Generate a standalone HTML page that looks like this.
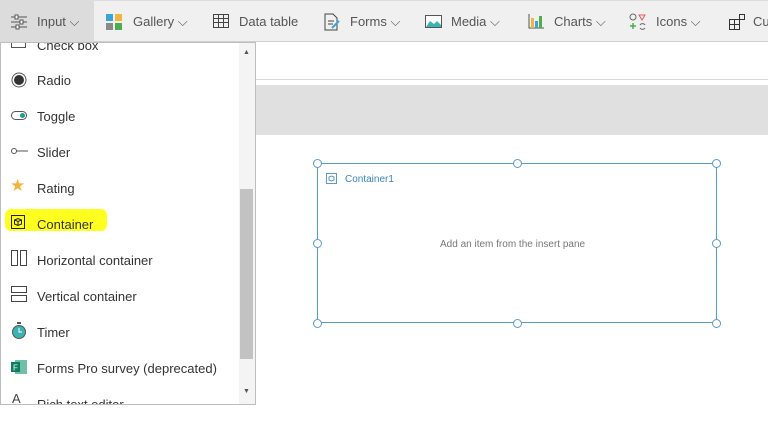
<!DOCTYPE html>
<html><head><style>
*{margin:0;padding:0;box-sizing:border-box}
body{width:768px;height:428px;background:#fff;position:relative;overflow:hidden;font-family:"Liberation Sans",sans-serif;color:#333}
.tb{position:absolute;left:0;top:0;width:768px;height:42px;background:#f0f0f0;border-top:1px solid #ddd;border-bottom:1px solid #d0d0d0}
.ti{position:absolute;top:13px;font-size:13px;color:#555;white-space:nowrap}
.strip{position:absolute;left:0;top:48px;width:768px;height:32px;background:#fff;border-bottom:1px solid #d8d8d8}
.gray{position:absolute;left:0;top:85px;width:768px;height:50px;background:#e0e0e0}
.dd{position:absolute;left:0;top:42px;width:256px;height:363px;background:#fff;border:1px solid #bdbdbd;overflow:hidden}
.it{position:absolute;left:36px;font-size:13px;color:#333;white-space:nowrap}
.ic{position:absolute;left:10px}
.sb{position:absolute;left:238px;top:0;width:16px;height:361px;background:#f4f4f4}
.th{position:absolute;left:239px;top:146px;width:13px;height:170px;background:#c2c2c2}
.box{position:absolute;left:317px;top:163px;width:400px;height:160px;border:1.5px solid #5a9bc8}
.h{position:absolute;width:9px;height:9px;border:1.3px solid #5a9bc8;border-radius:50%;background:#fff}
</style></head><body>
<div class="tb">
 <div style="position:absolute;left:0;top:0;width:94px;height:41px;background:#dcdcdc"></div>
 <svg style="position:absolute;left:10px;top:13px" width="18" height="16"><g stroke="#555" fill="none"><line x1="1" y1="3" x2="17" y2="3"/><line x1="1" y1="8" x2="17" y2="8"/><line x1="1" y1="13" x2="17" y2="13"/><rect x="5" y="1" width="3" height="4" fill="#fff"/><rect x="10" y="6" width="3" height="4" fill="#fff"/><rect x="6" y="11" width="3" height="4" fill="#fff"/></g></svg>
 <div class="ti" style="left:37px">Input ⌵</div>
 <svg style="position:absolute;left:106px;top:13px" width="16" height="16"><rect x="0" y="0" width="7" height="7" fill="#3aa6d8"/><rect x="9" y="0" width="7" height="7" fill="#f2b53c"/><rect x="0" y="9" width="7" height="7" fill="#8a8a8a"/><rect x="9" y="9" width="7" height="7" fill="#4cae4c"/></svg>
 <div class="ti" style="left:133px">Gallery ⌵</div>
 <svg style="position:absolute;left:213px;top:13px" width="16" height="14"><rect x="0.5" y="0.5" width="15" height="13" fill="none" stroke="#444"/><path d="M0 4.5H16M0 8.5H16M5.5 0V14M10.5 0V14" stroke="#444"/></svg>
 <div class="ti" style="left:239px">Data table</div>
 <svg style="position:absolute;left:324px;top:12px" width="16" height="18"><path d="M1 1H9L13 5V17H1Z" fill="none" stroke="#444"/><path d="M4 8H10M4 11H9" stroke="#444"/><path d="M8 15L15 8" stroke="#3aa6d8" stroke-width="2"/></svg>
 <div class="ti" style="left:350px">Forms ⌵</div>
 <svg style="position:absolute;left:425px;top:14px" width="17" height="13"><rect x="0.5" y="0.5" width="16" height="12" fill="#fff" stroke="#555"/><path d="M1 12L5 6L9 9L12 6L16 10V12Z" fill="#3bb3b3"/></svg>
 <div class="ti" style="left:451px">Media ⌵</div>
 <svg style="position:absolute;left:528px;top:13px" width="16" height="15"><path d="M1 0V14H16" stroke="#555" fill="none"/><rect x="3" y="4" width="3" height="10" fill="#f2b53c"/><rect x="7" y="7" width="3" height="7" fill="#3aa6d8"/><rect x="11" y="2" width="3" height="12" fill="#4cae4c"/></svg>
 <div class="ti" style="left:554px">Charts ⌵</div>
 <svg style="position:absolute;left:629px;top:12px" width="18" height="18"><circle cx="4" cy="4" r="3" fill="none" stroke="#666"/><path d="M10 2h6l-3 5z" fill="none" stroke="#e55"/><path d="M4 10v6M1 13h6" stroke="#4cae4c" stroke-width="1.5"/><path d="M11 12a3 3 0 0 1 5 0M16 15a3 3 0 0 1-5 0" stroke="#666" fill="none"/></svg>
 <div class="ti" style="left:656px">Icons ⌵</div>
 <svg style="position:absolute;left:729px;top:13px" width="16" height="16"><path d="M0.5 5.5H10.5V15.5H0.5ZM5.5 5.5V15.5M0.5 10.5H10.5" fill="none" stroke="#333"/><rect x="10.5" y="0.5" width="5" height="5" fill="none" stroke="#333"/></svg>
 <div class="ti" style="left:753px">Cu</div>
</div>
<div class="strip"></div>
<div class="gray"></div>
<div class="box"></div>
<div class="h" style="left:313px;top:159px"></div><div class="h" style="left:513px;top:159px"></div><div class="h" style="left:712px;top:159px"></div>
<div class="h" style="left:313px;top:239px"></div><div class="h" style="left:712px;top:239px"></div>
<div class="h" style="left:313px;top:319px"></div><div class="h" style="left:513px;top:319px"></div><div class="h" style="left:712px;top:319px"></div>
<svg style="position:absolute;left:326px;top:173px" width="11" height="11"><rect x="0.5" y="0.5" width="10" height="10" fill="none" stroke="#5a9bc8"/><path d="M3 4L5.5 3L8 4V7L5.5 8L3 7Z" fill="none" stroke="#5a9bc8"/></svg>
<div style="position:absolute;left:345px;top:174px;font-size:10px;color:#3a85b8">Container1</div>
<div style="position:absolute;left:440px;top:239px;font-size:10px;color:#777">Add an item from the insert pane</div>
<div class="dd">
 <div class="sb"></div><div class="th"></div>
 <div style="position:absolute;left:242px;top:6px;font-size:7px;color:#555">▲</div>
 <div style="position:absolute;left:242px;top:345px;font-size:7px;color:#555">▼</div>
 <svg class="ic" style="top:-6px" width="16" height="12"><rect x="0.5" y="0.5" width="14" height="10" fill="none" stroke="#555"/></svg>
 <div class="it" style="top:-5px">Check box</div>
 <svg class="ic" style="top:29px" width="16" height="16"><circle cx="8" cy="8" r="7" fill="none" stroke="#555"/><circle cx="8" cy="8" r="5" fill="#333"/></svg>
 <div class="it" style="top:30px">Radio</div>
 <svg class="ic" style="top:68px" width="18" height="10"><rect x="0.5" y="0.5" width="15" height="8" rx="4" fill="none" stroke="#555"/><circle cx="11.5" cy="4.5" r="2.5" fill="#16a08d"/></svg>
 <div class="it" style="top:66px">Toggle</div>
 <svg class="ic" style="top:104px" width="18" height="8"><circle cx="3" cy="4" r="2.5" fill="none" stroke="#555"/><path d="M5.5 4H17" stroke="#555"/></svg>
 <div class="it" style="top:102px">Slider</div>
 <div style="position:absolute;left:9px;top:133px;font-size:17px;color:#f2b53c">★</div>
 <div class="it" style="top:138px">Rating</div>
 <div style="position:absolute;left:4px;top:166px;width:102px;height:22px;background:#ffff1f;border-radius:6px"></div>
 <svg class="ic" style="top:172px" width="14" height="14"><rect x="0.5" y="0.5" width="13" height="13" fill="none" stroke="#222"/><path d="M3.5 5L7 3.5L10.5 5V9L7 10.5L3.5 9ZM3.5 5L7 6.5L10.5 5M7 6.5V10.5" fill="none" stroke="#222"/></svg>
 <div class="it" style="top:174px">Container</div>
 <svg class="ic" style="top:207px" width="16" height="16"><rect x="0.5" y="0.5" width="6" height="15" fill="none" stroke="#444"/><rect x="9.5" y="0.5" width="6" height="15" fill="none" stroke="#444"/></svg>
 <div class="it" style="top:210px">Horizontal container</div>
 <svg class="ic" style="top:243px" width="16" height="17"><rect x="0.5" y="0.5" width="15" height="6" fill="none" stroke="#444"/><rect x="0.5" y="9.5" width="15" height="6" fill="none" stroke="#444"/></svg>
 <div class="it" style="top:246px">Vertical container</div>
 <svg class="ic" style="top:279px" width="16" height="17"><rect x="6" y="0" width="4" height="2" fill="#555"/><circle cx="8" cy="10" r="6.5" fill="#3bb3b3" stroke="#555"/><path d="M8 6V10H11" stroke="#fff" fill="none"/></svg>
 <div class="it" style="top:282px">Timer</div>
 <svg class="ic" style="top:316px" width="16" height="16"><rect x="4" y="1" width="12" height="14" fill="#6fc0a8"/><rect x="0" y="3" width="9" height="10" fill="#0f7b5f"/><text x="2" y="11.5" font-size="8" fill="#fff" font-family="Liberation Sans">F</text></svg>
 <div class="it" style="top:318px">Forms Pro survey (deprecated)</div>
 <div style="position:absolute;left:11px;top:348px;font-size:13px;color:#444">A</div>
 <div class="it" style="top:354px">Rich text editor</div>
</div>
</body></html>
